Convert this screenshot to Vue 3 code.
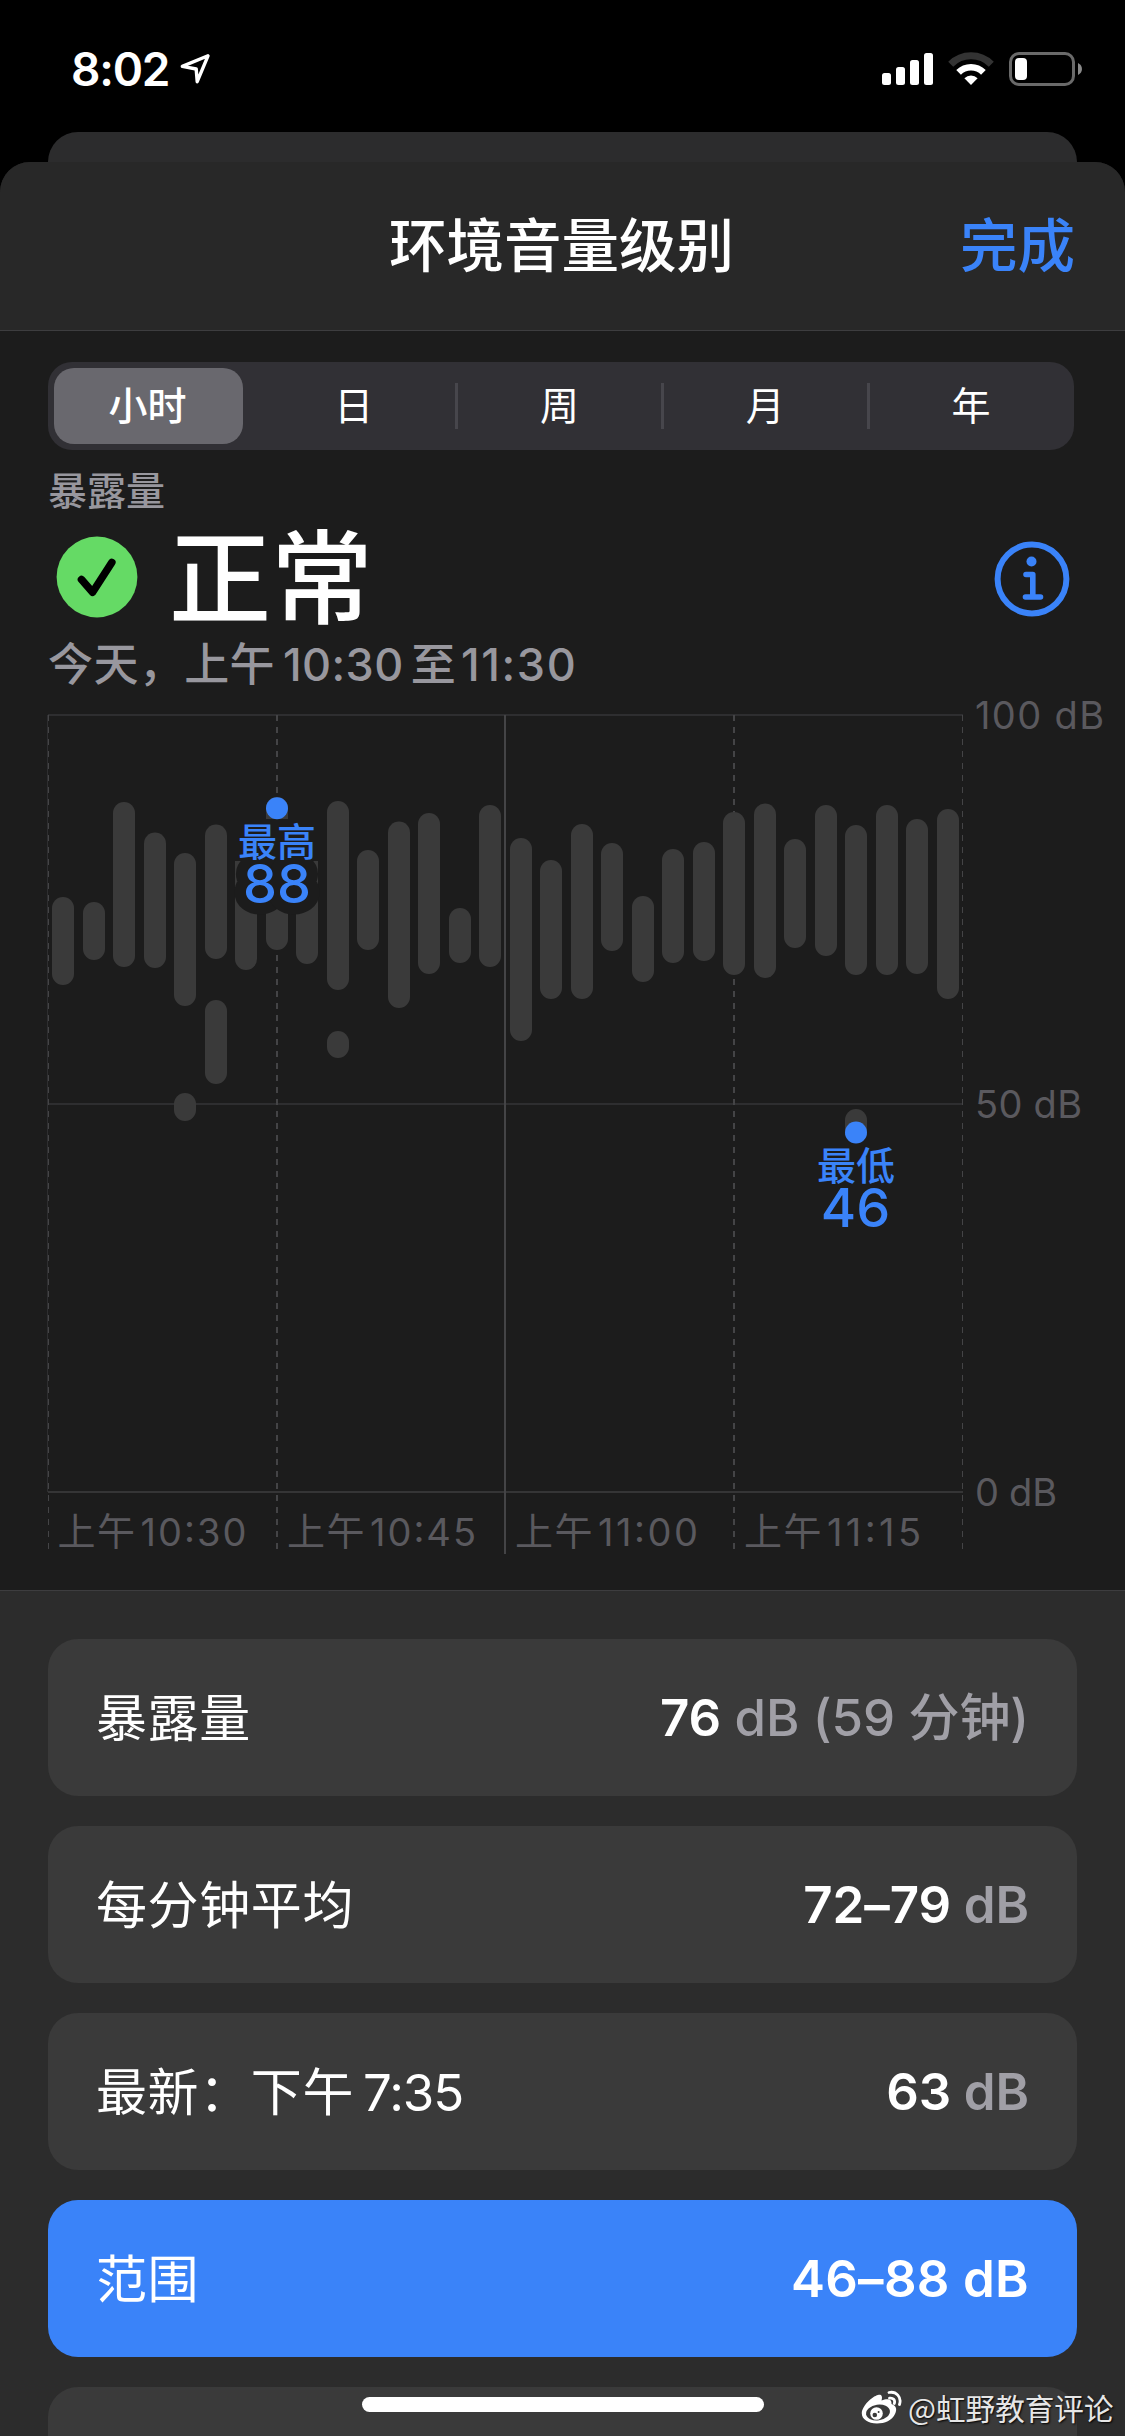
<script setup>
const tabs = ['小时', '日', '周', '月', '年']

// [slot index, top, bottom] of every measured range, in chart units
const ranges = [
  [0, 897, 985], [1, 902, 960], [2, 802, 967], [3, 832.5, 968], [4, 853, 1006],
  [4, 1093, 1121], [5, 824.5, 959], [5, 1000, 1084], [6, 850, 970], [7, 797, 950],
  [8, 850, 964], [9, 801, 990], [9, 1031, 1058], [10, 850, 950], [11, 821.5, 1008],
  [12, 813, 974], [13, 908, 963], [14, 805, 967], [15, 838, 1041], [16, 860, 999],
  [17, 824, 999], [18, 843, 951], [19, 896, 982], [20, 849, 963], [21, 842, 961],
  [22, 812, 975], [23, 803.5, 978], [24, 839, 948], [25, 805, 956], [26, 825, 975],
  [26, 1109, 1143], [27, 805, 975], [28, 819, 974], [29, 809, 999],
]
const bars = ranges.map(([slot, top, bottom]) => ({
  x: Math.round(52.4 + slot * 30.5),
  y: top,
  h: bottom - top,
}))

const times = [
  { x: 57.5, t: '10:30', w: 106 },
  { x: 287, t: '10:45', w: 106 },
  { x: 515, t: '11:00', w: 100 },
  { x: 744, t: '11:15', w: 94 },
]
const levels = [
  { y: 728.5, t: '100 dB', w: 129 },
  { y: 1117.5, t: '50 dB', w: 107 },
  { y: 1506, t: '0 dB', w: 82 },
]

const rows = [
  { label: '暴露量', value: '76', unit: 'dB (59 分钟)', long: true },
  { label: '每分钟平均', value: '72–79', unit: 'dB' },
  { label: '最新：下午', time: '7:35', value: '63', unit: 'dB' },
  { label: '范围', value: '46–88', unit: 'dB', active: true },
  { label: '', value: '', unit: '' },
]
</script>

<template>
  <div class="phone">
    <header class="status">
      <div class="clock">
        <span class="time">8:02</span>
        <svg class="loc" width="32" height="32" viewBox="0 0 32 32">
          <path d="M28 3.8 L2.3 14.4 L16.2 17 L17.2 29.7 Z" fill="none" stroke="#fff" stroke-width="3.4" stroke-linejoin="round" />
        </svg>
      </div>
      <svg class="indicators" width="202" height="36" viewBox="881 51 202 36">
        <g fill="#fff">
          <rect x="882" y="73" width="9" height="12" rx="2.5" />
          <rect x="896" y="67" width="9" height="18" rx="2.5" />
          <rect x="910" y="60" width="9" height="25" rx="2.5" />
          <rect x="924" y="53" width="9" height="32" rx="2.5" />
        </g>
        <path d="M950.7 64.3 A28.5 28.5 0 0 1 991.3 64.3" fill="none" stroke="#333" stroke-width="7" />
        <path d="M958.6 72.4 A17.5 17.5 0 0 1 983.4 72.4" fill="none" stroke="#fff" stroke-width="6.6" />
        <path d="M971 85 L964.4 78.2 A9.6 9.6 0 0 1 977.6 78.2 Z" fill="#fff" />
        <rect x="1010.5" y="53.5" width="63" height="31" rx="8.5" fill="none" stroke="#6a6a6a" stroke-width="3" />
        <rect x="1015" y="58" width="12" height="22" rx="4" fill="#fff" />
        <path d="M1078 63 C1083.3 65.5 1083.3 72.5 1078 75 Z" fill="#8a8a8a" />
      </svg>
    </header>

    <div class="back-sheet"></div>

    <main class="sheet">
      <nav class="nav">
        <span></span>
        <h1>环境音量级别</h1>
        <a class="done">完成</a>
      </nav>

      <section class="overview">
        <div class="segments">
          <div v-for="(tab, i) in tabs" :key="tab" class="segment" :class="{ selected: i === 0, ruled: i > 0 && i < 4 }">
            <span>{{ tab }}</span>
          </div>
        </div>

        <p class="caption">暴露量</p>
        <div class="state">
          <svg class="check" width="82" height="82" viewBox="0 0 82 82">
            <circle cx="41" cy="41" r="40.4" fill="#65da65" />
            <path d="M25.5 43.5 L36.6 56.2 L55.8 26.5" fill="none" stroke="#000" stroke-width="7.6" stroke-linecap="round" stroke-linejoin="round" />
          </svg>
          <strong>正常</strong>
          <svg class="info" width="76" height="76" viewBox="0 0 76 76" fill="none" stroke="#3a83f9">
            <circle cx="38" cy="38" r="34.4" stroke-width="6" />
            <circle cx="37.5" cy="20.5" r="5" fill="#3a83f9" stroke="none" />
            <path d="M32 33.5 H38.8 V56 M31.500 56 H46.500" stroke-width="5.6" stroke-linecap="round" stroke-linejoin="round" />
          </svg>
        </div>
        <p class="period">今天，上午<span class="num n1">10:30</span>至<span class="num n2">11:30</span></p>

        <svg class="chart" width="1125" height="860" viewBox="0 696 1125 860">
          <g stroke="#2e2e30" stroke-width="2" fill="none">
            <path d="M48 715 H963 M48 1104 H963" />
            <path d="M48 1492 H963" stroke="#353536" />
            <path d="M47.5 715 V1492" stroke-width="1" />
          </g>
          <g stroke="#444446" fill="none" stroke-dasharray="6 6">
            <path d="M48.5 715 V1549 M962.5 715 V1549" stroke-width="1" />
            <path d="M277 715 V1549 M734 715 V1549" stroke-width="2" />
          </g>
          <path d="M505 715 V1554" stroke="#444446" stroke-width="2" />

          <rect v-for="(b, i) in bars" :key="i" :x="b.x" :y="b.y" width="22" :height="b.h" rx="11" fill="#3a3a3a" />

          <g class="mark">
            <rect class="clear" x="235" y="819" width="84" height="42" />
            <text class="mark-num halo" x="277" y="902.5">88</text>
            <text class="mark-name" x="277" y="855.5">最高</text>
            <circle cx="277" cy="808.3" r="11" />
          </g>
          <g class="mark">
            <circle cx="856" cy="1132.5" r="11" />
            <text class="mark-name" x="856" y="1179.5">最低</text>
            <text class="mark-num" x="855.5" y="1226.5">46</text>
          </g>

          <g class="axis">
            <text v-for="l in levels" :key="l.t" x="975" :y="l.y" :textLength="l.w">{{ l.t }}</text>
            <template v-for="t in times" :key="t.t">
              <text :x="t.x" y="1544.5" textLength="77.500">上午</text>
              <text :x="t.x + 83" y="1545.5" :textLength="t.w">{{ t.t }}</text>
            </template>
          </g>
        </svg>
      </section>

      <section class="rows">
        <div v-for="(row, i) in rows" :key="i" class="row" :class="{ active: row.active }">
          <span class="label">{{ row.label }}<span v-if="row.time" class="row-time">{{ row.time }}</span></span>
          <span class="value" :class="{ long: row.long }"><b>{{ row.value }}</b> {{ row.unit }}</span>
        </div>
      </section>
    </main>

    <div class="home"></div>
    <div class="watermark">
      <svg width="42" height="36" viewBox="0 0 42 36">
        <path d="M17 5 C20 4 22 6 20.500 10.500 C26 8.500 31 8.500 30.500 14 C35 15.500 36.500 19 34 24 C31 30.500 24 33.500 16 33.500 C7 33.500 .8 29 .8 23.500 C.8 16 11 6.500 17 5 Z" fill="#fff" />
        <ellipse cx="17" cy="22.500" rx="12" ry="7.800" transform="rotate(-8 17 22.500)" fill="#3a3a3a" />
        <circle cx="15.500" cy="23.500" r="6.300" fill="#fff" />
        <circle cx="13.800" cy="25" r="2.300" fill="#3a3a3a" />
        <circle cx="17.600" cy="22" r="1" fill="#3a3a3a" />
        <path d="M28 2.500 C35 1 41 7 38.500 14.500 M28.500 8.200 C32 7.500 34.500 10 33.300 13.500" fill="none" stroke="#fff" stroke-width="2.800" stroke-linecap="round" />
      </svg>
      <span>@虹野教育评论</span>
    </div>
  </div>
</template>

<style>
body {
  background: #000;
}
</style>

<style scoped>
.phone {
  position: relative;
  width: 1125px;
  height: 2436px;
  overflow: hidden;
  background: #000;
  color: #fff;
  font-family: Inter, "Noto Sans CJK SC", sans-serif;
}
.phone p,
.phone h1 {
  margin: 0;
}
.status {
  box-sizing: border-box;
  height: 132px;
  padding: 51px 42px 0 71px;
  display: flex;
  justify-content: space-between;
  align-items: flex-start;
}
.clock {
  display: flex;
  align-items: flex-start;
}
.time {
  width: 99px;
  font-size: 46px;
  font-weight: 600;
  line-height: 36px;
  letter-spacing: -1.2px;
}
.loc {
  margin: 1px 0 0 10px;
}
.back-sheet {
  height: 30px;
  margin: 0 48px;
  border-radius: 30px 30px 0 0;
  background: #2c2c2d;
}
.sheet {
  height: 2274px;
  display: flex;
  flex-direction: column;
  border-radius: 30px 30px 0 0;
  overflow: hidden;
  background: #1c1c1c;
}
.nav {
  box-sizing: border-box;
  height: 169px;
  flex: none;
  display: grid;
  grid-template-columns: 1fr auto 1fr;
  align-items: center;
  padding: 0 50px 1px;
  background: #282828;
  border-bottom: 1px solid #3d3d3f;
}
.nav h1,
.done {
  font-size: 57.5px;
  font-weight: 500;
  line-height: 80px;
}
.nav h1 {
  margin-left: -2px;
}
.done {
  justify-self: end;
  color: #3a83f9;
}
.overview {
  height: 1259px;
  flex: none;
  display: flex;
  flex-direction: column;
}
.segments {
  box-sizing: border-box;
  width: 1026px;
  height: 88px;
  flex: none;
  margin: 31px 0 0 48px;
  padding: 6px 0 6px 6px;
  display: flex;
  border-radius: 24px;
  background: #313035;
}
.segment {
  position: relative;
  flex: 1;
  display: flex;
  align-items: center;
  justify-content: center;
  font-size: 39px;
  font-weight: 400;
  line-height: 76px;
}
.segment.selected {
  flex: 0 0 189px;
  margin-right: 8px;
  border-radius: 20px;
  background: #69686e;
  font-weight: 500;
}
.segment.selected span {
  margin-left: -2px;
}
.segment.ruled::after {
  content: "";
  position: absolute;
  right: -1.5px;
  top: 15px;
  width: 3px;
  height: 46px;
  background: #47464c;
}
.caption {
  height: 56px;
  margin-left: 48px !important;
  padding-top: 13px;
  color: #98979e;
  font-size: 39px;
  font-weight: 500;
  line-height: 56px;
}
.state {
  height: 114px;
  display: flex;
  align-items: center;
  padding: 0 55px 0 56px;
}
.check {
  margin-top: 1px;
}
.info {
  margin-top: 6px;
}
.state strong {
  flex: 1;
  margin-left: 31px;
  padding-top: 6px;
  font-size: 102px;
  font-weight: 500;
  line-height: 114px;
}
.period {
  height: 63px;
  margin-left: 48px !important;
  color: #98979e;
  font-size: 45px;
  font-weight: 500;
  line-height: 64px;
  letter-spacing: 0.4px;
  white-space: nowrap;
}
.num {
  display: inline-block;
}
.n1 {
  margin: 0 7px 0 8px;
}
.n2 {
  margin-left: 5px;
  letter-spacing: 1.6px;
}
.chart {
  display: block;
  flex: none;
  overflow: visible;
}
.mark {
  fill: #3a83f9;
  text-anchor: middle;
}
.mark .clear {
  fill: #1c1c1c;
}
.mark-name {
  font-size: 39px;
  font-weight: 500;
}
.mark-num {
  font-size: 54px;
  font-weight: 500;
}
.mark-num.halo {
  stroke: #1c1c1c;
  stroke-width: 23px;
  stroke-linejoin: round;
  paint-order: stroke;
}
.axis {
  fill: #5a595e;
  font-size: 38px;
  font-weight: 400;
}
.rows {
  box-sizing: border-box;
  flex: 1;
  display: flex;
  flex-direction: column;
  gap: 30px;
  padding: 48px 48px 0;
  border-top: 1px solid #3d3d3f;
  background: #2c2c2c;
}
.row {
  box-sizing: border-box;
  height: 157px;
  flex: none;
  display: flex;
  align-items: center;
  justify-content: space-between;
  padding: 0 48px;
  border-radius: 30px;
  background: #3a3a3a;
  font-size: 51px;
  line-height: 74px;
}
.label {
  padding-top: 3px;
  letter-spacing: 0.6px;
}
.value {
  color: #a09fa6;
  font-weight: 600;
  letter-spacing: -0.1px;
}
.value.long {
  font-weight: 500;
}
.value b {
  color: #fff;
  font-weight: 600;
}
.row-time {
  margin-left: 9px;
  letter-spacing: -1px;
}
.row.active {
  background: #3a83f9;
}
.row.active .value {
  color: #fff;
  letter-spacing: 0.3px;
}
.home {
  position: absolute;
  left: 362px;
  top: 2397px;
  width: 402px;
  height: 15px;
  border-radius: 8px;
  background: #fff;
}
.watermark {
  position: absolute;
  left: 861px;
  top: 2388px;
  display: flex;
  align-items: center;
  gap: 5px;
  color: #e6e6e6;
  font-family: "Noto Sans CJK SC", sans-serif;
  font-size: 29.6px;
  line-height: 40px;
  white-space: nowrap;
  text-shadow: 1px 1px 2px #000;
}
</style>
